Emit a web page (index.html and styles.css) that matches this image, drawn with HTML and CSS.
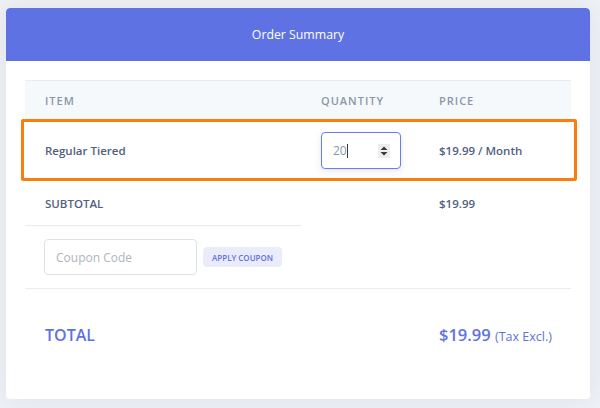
FILE: index.html
```html
<!DOCTYPE html>
<html>
<head>
<meta charset="utf-8">
<link rel="stylesheet" href="styles.css">
</head>
<body>
<div class="card">
  <div class="card-header">Order Summary</div>
  <div class="card-body">
    <div class="table">
      <div class="row thead">
        <div class="cell">Item</div>
        <div class="cell">Quantity</div>
        <div class="cell">Price</div>
      </div>
      <div class="row item-row highlight">
        <div class="cell name">Regular Tiered</div>
        <div class="cell">
          <div class="qty-input">
            <span class="qty-value">20</span><span class="caret"></span>
            <span class="spinner">
              <svg width="12" height="14" viewBox="0 0 12 14"><path d="M6 2.5 L9.5 6 H2.5 Z M6 11.5 L9.5 8 H2.5 Z" fill="#3a3a3a"/></svg>
            </span>
          </div>
        </div>
        <div class="cell price">$19.99 / Month</div>
      </div>
      <div class="row subtotal-row">
        <div class="cell subtotal-label">Subtotal</div>
        <div class="cell"></div>
        <div class="cell price">$19.99</div>
      </div>
      <div class="row coupon-row">
        <div class="cell coupon-cell">
          <div class="coupon-input">Coupon Code</div>
          <div class="coupon-btn">Apply Coupon</div>
        </div>
      </div>
      <div class="row total-row">
        <div class="cell total-label">Total</div>
        <div class="cell"></div>
        <div class="cell total-price">$19.99 <span class="tax">(Tax Excl.)</span></div>
      </div>
    </div>
  </div>
</div>
</body>
</html>
```

FILE: styles.css
```css
* { box-sizing: border-box; }
html, body { margin: 0; }
body {
  background: #eef1f6;
  padding: 8px 10px 9px 6px;
  font-family: "Open Sans", "Liberation Sans", sans-serif;
  color: #525f7f;
}
.card {
  width: 584px;
  height: 391px;
  background: #fff;
  border-radius: 4px;
  box-shadow: 0 0 24px rgba(136, 152, 170, 0.15);
  overflow: hidden;
}
.card-header {
  height: 53px;
  background: #5e72e4;
  color: #fff;
  font-size: 12.3px;
  display: flex;
  align-items: center;
  justify-content: center;
  border-radius: 4px 4px 0 0;
}
.card-body {
  padding: 19px 19px 0 19px;
}
.table {
  width: 546px;
}
.row {
  display: grid;
  grid-template-columns: 276px 118px 152px;
  align-items: center;
}
.cell {
  padding-left: 20px;
}
.thead {
  height: 40px;
  background: #f6f9fc;
  border-top: 1px solid #e9ecef;
  color: #8898aa;
  font-size: 11px;
  font-weight: 600;
  letter-spacing: 1px;
  text-transform: uppercase;
}
.item-row {
  height: 61px;
  position: relative;
  font-size: 11.5px;
  font-weight: 600;
}
.highlight::after {
  content: "";
  position: absolute;
  left: -4px;
  right: -6px;
  top: -1px;
  bottom: 0;
  border: 3px solid #fb7d0c;
  border-radius: 2px;
  pointer-events: none;
}
.qty-input {
  width: 80px;
  height: 37px;
  border: 1px solid #6c7de6;
  border-radius: 4px;
  box-shadow: 0 3px 9px rgba(50, 50, 93, 0.08), 0 1px 3px rgba(0, 0, 0, 0.06);
  display: flex;
  align-items: center;
  padding-left: 11px;
  padding-right: 10px;
  font-size: 12px;
  font-weight: 400;
  color: #8898aa;
}
.caret {
  width: 1px;
  height: 14px;
  background: #3a3a3a;
}
.spinner {
  margin-left: auto;
  width: 12px;
  height: 14px;
  background: #eeeeee;
  display: flex;
}
.price {
  font-size: 11.5px;
  font-weight: 600;
  color: #525f7f;
}
.subtotal-row {
  height: 44px;
  font-size: 11.5px;
  font-weight: 600;
}
.subtotal-label { text-transform: uppercase; }
.coupon-row {
  grid-template-columns: 276px;
  height: 63px;
}
.coupon-cell {
  height: 100%;
  border-top: 1px solid #e9ecef;
  display: flex;
  align-items: center;
  gap: 6px;
  padding-left: 19px;
}
.total-row {
  height: 92px;
  color: #5e72e4;
  border-top: 1px solid #e9ecef;
}
.coupon-input {
  width: 153px;
  height: 36px;
  border: 1px solid #dee2e6;
  border-radius: 4px;
  display: flex;
  align-items: center;
  padding-left: 11px;
  font-size: 12px;
  color: #adb5bd;
}
.coupon-btn {
  height: 20px;
  padding: 0 9px;
  background: #eaecfb;
  border-radius: 4px;
  color: #5e72e4;
  font-size: 8px;
  font-weight: 600;
  text-transform: uppercase;
  display: flex;
  align-items: center;
}
.total-label {
  font-size: 16px;
  font-weight: 600;
  text-transform: uppercase;
}
.total-price {
  font-size: 16.5px;
  font-weight: 600;
}
.tax {
  font-size: 12.5px;
  font-weight: 400;
}
```
